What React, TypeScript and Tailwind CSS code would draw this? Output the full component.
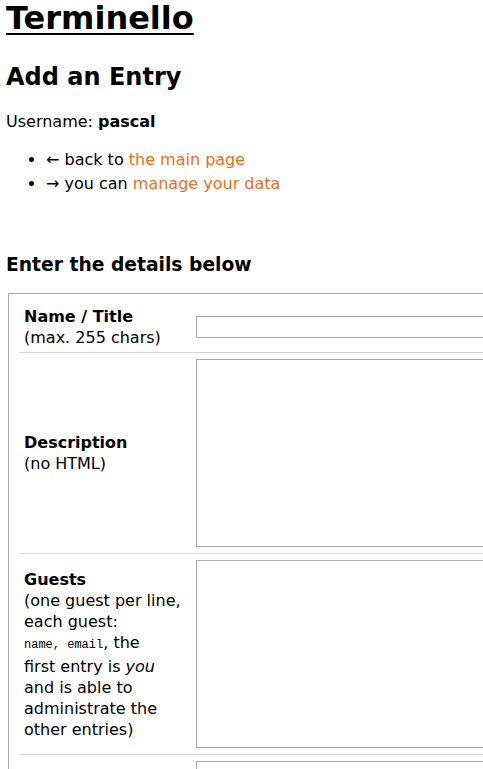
const fieldBorder = "border border-[#a9a9a9] bg-white";

const App = () => {
  return (
    <div className="h-screen overflow-hidden bg-white text-black font-['DejaVu_Sans',sans-serif]">
      <div className="pl-[6px]">
        <h1 className="text-[32px] leading-[37px] font-bold underline decoration-2 underline-offset-[4px]">
          Terminello
        </h1>
        <h2 className="mt-[26px] text-[24px] leading-[28px] font-bold">Add an Entry</h2>
        <p className="mt-[20px] text-[16px] leading-[21px]">
          Username: <b>pascal</b>
        </p>
        <ul className="mt-[16px] list-disc pl-[40px] text-[16px] leading-[24px]">
          <li>
            ← back to <a className="text-[#f26b1d]">the main page</a>
          </li>
          <li>
            → you can <a className="text-[#f26b1d]">manage your data</a>
          </li>
        </ul>
        <h3 className="mt-[58px] text-[18.72px] leading-[22px] font-bold">Enter the details below</h3>
      </div>

      <div className="mt-[17px] ml-[8px] w-[700px] border border-[#a9a9a9] pt-[8px] pl-[10px]">
        {/* name */}
        <div className="flex items-center border-b border-[#d4d4d4]">
          <div className="w-[171px] shrink-0 py-[4px] pl-[5px] text-[16px] leading-[21px]">
            <b>Name / Title</b>
            <br />
            (max. 255 chars)
          </div>
          <div className="pl-[6px]">
            <div className={`${fieldBorder} h-[22px] w-[400px]`} />
          </div>
        </div>

        {/* description */}
        <div className="flex items-center border-b border-[#d4d4d4]">
          <div className="w-[171px] shrink-0 pl-[5px] text-[16px] leading-[21px]">
            <b>Description</b>
            <br />
            (no HTML)
          </div>
          <div className="py-[6px] pl-[6px]">
            <div className={`${fieldBorder} h-[188px] w-[400px]`} />
          </div>
        </div>

        {/* guests */}
        <div className="flex items-center border-b border-[#d4d4d4]">
          <div className="w-[171px] shrink-0 pl-[5px] text-[16px] leading-[21px] whitespace-nowrap">
            <b>Guests</b>
            <br />
            (one guest per line,
            <br />
            each guest:
            <br />
            <span className="font-['Liberation_Mono',monospace] text-[12px]">name, email</span>, the
            <br />
            first entry is <i>you</i>
            <br />
            and is able to
            <br />
            administrate the
            <br />
            other entries)
          </div>
          <div className="py-[6px] pl-[6px]">
            <div className={`${fieldBorder} h-[188px] w-[400px]`} />
          </div>
        </div>

        <div className="flex">
          <div className="w-[171px] shrink-0" />
          <div className="py-[6px] pl-[6px]">
            <div className={`${fieldBorder} h-[60px] w-[400px]`} />
          </div>
        </div>
      </div>
    </div>
  );
};

export default App;
